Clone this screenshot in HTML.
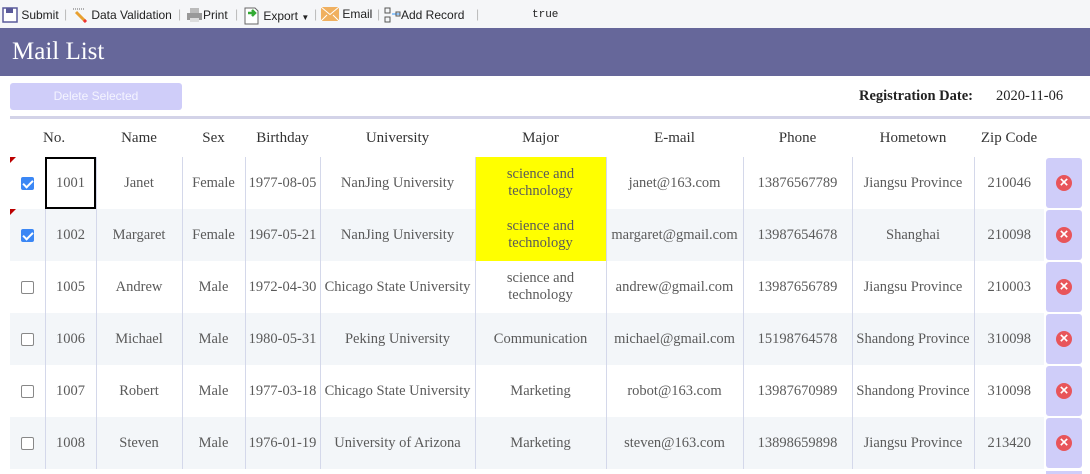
<!DOCTYPE html>
<html><head><style>
*{margin:0;padding:0;box-sizing:border-box}
html,body{width:1090px;height:474px;overflow:hidden}
body{background:#fff;font-family:"Liberation Serif",serif;position:relative}
.tb{position:absolute;left:0;top:0;width:1090px;height:28px;background:#f5f6f8;font-family:"Liberation Sans",sans-serif;font-size:12px;color:#222}
.tb span{position:absolute;top:7px;white-space:nowrap}
.sep{color:#bbb}
.title{position:absolute;left:0;top:28px;width:1090px;height:48px;background:#66679a;color:#fff;font-family:"Liberation Serif","DejaVu Serif",serif;font-size:25px;padding:10px 12px}
.del{position:absolute;left:10px;top:83px;width:172px;height:27px;background:#cfcdf9;border-radius:3px;color:#f4f4ff;font-family:"Liberation Sans",sans-serif;font-size:12px;text-align:center;line-height:27px}
.reg{position:absolute;top:88px;font-size:14.5px;color:#222}
.hl{position:absolute;left:10px;top:116px;width:1080px;height:3px;background:#d3d3e8}
table{position:absolute;left:10px;top:119px;border-collapse:collapse;table-layout:fixed;width:1034px}
th{height:38px;font-weight:normal;font-size:15px;color:#333;text-align:center}
td{height:52px;font-size:14.5px;color:#5a5a5a;text-align:center;border-left:1px solid #d4d8ea;line-height:17px;position:relative}
td:first-child{border-left:none}
tr.s td{background:#f3f6f9}
.cb{display:inline-block;width:13px;height:13px;border:1px solid #888;border-radius:2px;background:#fff;vertical-align:middle}
.cb.on{background:#3b87f5;border-color:#3b87f5;position:relative}
.cb.on:after{content:"";position:absolute;left:3px;top:0px;width:4px;height:8px;border:solid #fff;border-width:0 2px 2px 0;transform:rotate(45deg)}
.y{background:#ffff00!important}
.x{position:absolute;left:1046px;width:36px;height:50px;background:#cfcdf9;border-radius:3px}
.x:after{content:"×";position:absolute;left:10px;top:17px;width:16px;height:16px;border-radius:50%;background:#e8555a;color:#fff;font-family:"Liberation Sans",sans-serif;font-weight:bold;font-size:15px;line-height:16px;text-align:center}
.tri{position:absolute;left:0;top:0;width:0;height:0;border-top:6px solid #b00;border-right:6px solid transparent}
</style></head><body>
<div class="tb">
<span style="left:2px"><svg width="16" height="16" style="vertical-align:-4px"><rect x="1" y="1" width="14" height="14" fill="#fff" stroke="#5a5a9a" stroke-width="1.5"/><rect x="4" y="1" width="7" height="5" fill="#5a5a9a"/></svg> Submit</span>
<span class="sep" style="left:64px">|</span>
<span style="left:72px"><svg width="16" height="16" style="vertical-align:-4px"><path d="M1 2h12" stroke="#666" stroke-dasharray="1 1"/><path d="M4 5l9 9" stroke="#e8a030" stroke-width="3"/><path d="M12 13l2 2" stroke="#e33" stroke-width="3"/></svg> Data Validation</span>
<span class="sep" style="left:178px">|</span>
<span style="left:186px"><svg width="17" height="16" style="vertical-align:-4px"><rect x="1" y="6" width="15" height="7" fill="#999"/><rect x="4" y="1" width="9" height="5" fill="#bbb"/><rect x="4" y="11" width="9" height="4" fill="#ddd"/></svg>Print</span>
<span class="sep" style="left:235px">|</span>
<span style="left:243px"><svg width="17" height="18" style="vertical-align:-5px"><path d="M2 1h10l3 3v13H2z" fill="#fff" stroke="#666"/><path d="M5 6h7M9 3l3 3-3 3" stroke="#3a3" stroke-width="2.5" fill="none"/></svg> Export <span style="position:static;font-size:8px">▼</span></span>
<span class="sep" style="left:314px">|</span>
<span style="left:321px"><svg width="18" height="14" style="vertical-align:-3px"><rect width="18" height="14" fill="#f0b060"/><path d="M0 0l9 7.5L18 0M0 14l6-6M18 14l-6-6" stroke="#fff" fill="none"/></svg> Email</span>
<span class="sep" style="left:377px">|</span>
<span style="left:384px"><svg width="17" height="16" style="vertical-align:-4px"><rect x="1" y="1" width="5" height="5" fill="none" stroke="#555"/><rect x="1" y="10" width="5" height="5" fill="none" stroke="#555"/><path d="M8 7h8" stroke="#39f"/><rect x="12" y="5" width="4" height="4" fill="none" stroke="#555"/></svg>Add Record</span>
<span class="sep" style="left:476px">|</span>
<span style="left:532px;font-family:'Liberation Mono',monospace;font-size:11px;top:9px">true</span>
</div>
<div class="title">Mail List</div>
<div class="del">Delete Selected</div>
<div class="reg" style="left:859px;font-weight:bold">Registration Date:</div>
<div class="reg" style="left:996px">2020-11-06</div>
<div class="hl"></div>
<table>
<colgroup><col style="width:35px"><col style="width:51px"><col style="width:86px"><col style="width:63px"><col style="width:75px"><col style="width:155px"><col style="width:131px"><col style="width:137px"><col style="width:109px"><col style="width:122px"><col style="width:70px"></colgroup>
<tr><th></th><th style="text-align:left;padding-left:0;position:relative;left:-2px">No.</th><th>Name</th><th>Sex</th><th>Birthday</th><th>University</th><th>Major</th><th>E-mail</th><th>Phone</th><th>Hometown</th><th>Zip Code</th></tr>
<tr><td><div class="tri"></div><span class="cb on"></span></td><td style="outline:2px solid #000;outline-offset:-2px">1001</td><td>Janet</td><td>Female</td><td>1977-08-05</td><td>NanJing University</td><td class="y">science and<br>technology</td><td>janet@163.com</td><td>13876567789</td><td>Jiangsu Province</td><td>210046</td></tr>
<tr class="s"><td><div class="tri"></div><span class="cb on"></span></td><td>1002</td><td>Margaret</td><td>Female</td><td>1967-05-21</td><td>NanJing University</td><td class="y">science and<br>technology</td><td>margaret@gmail.com</td><td>13987654678</td><td>Shanghai</td><td>210098</td></tr>
<tr><td><span class="cb"></span></td><td>1005</td><td>Andrew</td><td>Male</td><td>1972-04-30</td><td>Chicago State University</td><td>science and<br>technology</td><td>andrew@gmail.com</td><td>13987656789</td><td>Jiangsu Province</td><td>210003</td></tr>
<tr class="s"><td><span class="cb"></span></td><td>1006</td><td>Michael</td><td>Male</td><td>1980-05-31</td><td>Peking University</td><td>Communication</td><td>michael@gmail.com</td><td>15198764578</td><td>Shandong Province</td><td>310098</td></tr>
<tr><td><span class="cb"></span></td><td>1007</td><td>Robert</td><td>Male</td><td>1977-03-18</td><td>Chicago State University</td><td>Marketing</td><td>robot@163.com</td><td>13987670989</td><td>Shandong Province</td><td>310098</td></tr>
<tr class="s"><td><span class="cb"></span></td><td>1008</td><td>Steven</td><td>Male</td><td>1976-01-19</td><td>University of Arizona</td><td>Marketing</td><td>steven@163.com</td><td>13898659898</td><td>Jiangsu Province</td><td>213420</td></tr>
</table>
<div class="x" style="top:158px"></div>
<div class="x" style="top:210px"></div>
<div class="x" style="top:262px"></div>
<div class="x" style="top:314px"></div>
<div class="x" style="top:366px"></div>
<div class="x" style="top:418px"></div>
<div style="position:absolute;left:1046px;top:471px;width:36px;height:3px;background:#cfcdf9"></div>
</body></html>
